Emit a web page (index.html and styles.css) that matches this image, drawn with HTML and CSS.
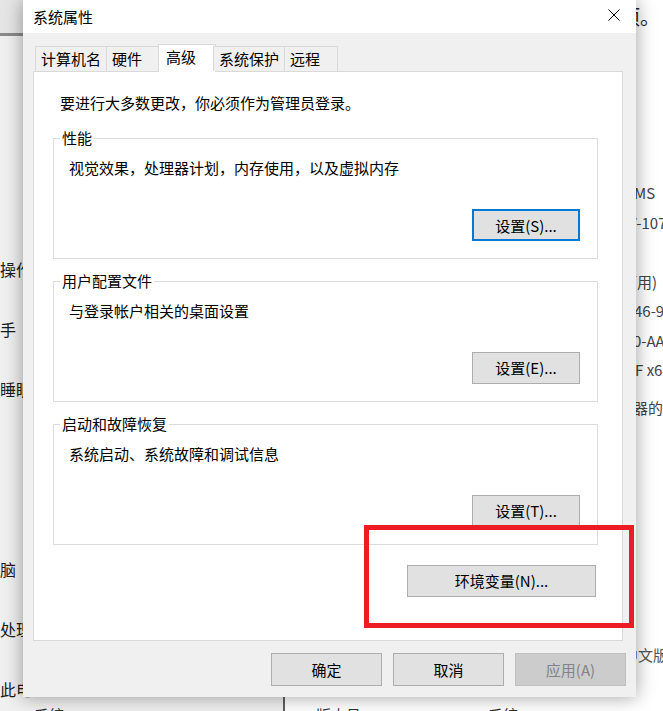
FILE: index.html
```html
<!DOCTYPE html>
<html lang="zh-CN">
<head>
  <meta charset="UTF-8" />
  <title>系统属性</title>
  <link rel="stylesheet" href="styles.css">
</head>
<body>

  <div class="side">
    <div class="side-top"></div>
    <div class="side-list">
      <div>操作</div>
      <div>手</div>
      <div>睡眠</div>
      <div></div>
      <div></div>
      <div>脑</div>
      <div>处理</div>
      <div>此电</div>
    </div>
  </div>

  <div class="info">
    <div class="info-title">选项。</div>
    <div class="info-list">
      <div class="i-ms">MS</div>
      <div class="i-ver">V-1070</div>
      <div></div>
      <div class="i-use">可用)</div>
      <div class="i-num">46-9</div>
      <div class="i-id">0-AA</div>
      <div class="i-arch">F x64</div>
      <div class="i-dev">器的</div>
    </div>
    <div class="info-foot">中文版</div>
  </div>

  <div class="foot-frag">
    <span class="f1">系统</span>
    <span class="f2">版本号</span>
    <span class="f3">系统</span>
  </div>

  <div class="dialog">
    <div class="titlebar">
      <span>系统属性</span>
      <div class="close">
        <svg width="12" height="12" viewBox="0 0 12 12">
          <path d="M0.5 0.5 L11.5 11.5 M11.5 0.5 L0.5 11.5" stroke="#000" stroke-width="1" fill="none"/>
        </svg>
      </div>
    </div>

    <div class="body">
      <div class="tabs">
        <div class="tab">计算机名</div>
        <div class="tab">硬件</div>
        <div class="tab active">高级</div>
        <div class="tab">系统保护</div>
        <div class="tab">远程</div>
      </div>

      <div class="panel">
        <div class="intro">要进行大多数更改，你必须作为管理员登录。</div>

        <fieldset class="group first">
          <legend>性能</legend>
          <p>视觉效果，处理器计划，内存使用，以及虚拟内存</p>
          <div class="row"><button class="btn default">设置(S)...</button></div>
        </fieldset>

        <fieldset class="group">
          <legend>用户配置文件</legend>
          <p>与登录帐户相关的桌面设置</p>
          <div class="row"><button class="btn">设置(E)...</button></div>
        </fieldset>

        <fieldset class="group">
          <legend>启动和故障恢复</legend>
          <p>系统启动、系统故障和调试信息</p>
          <div class="row"><button class="btn">设置(T)...</button></div>
        </fieldset>

        <div class="env-row"><button class="btn env">环境变量(N)...</button></div>
      </div>
    </div>

    <div class="footer">
      <button class="btn wide">确定</button>
      <button class="btn wide">取消</button>
      <button class="btn wide" disabled>应用(A)</button>
    </div>
  </div>

  <div class="mark"></div>

</body>
</html>
```

FILE: styles.css
```css
* { box-sizing: border-box; }

body {
  margin: 0;
  width: 663px;
  height: 711px;
  overflow: hidden;
  position: relative;
  background: #fff;
  font-family: "Noto Sans CJK SC", sans-serif;
  font-size: 15px;
  color: #000;
}

/* desktop behind the dialog */
.side {
  position: absolute;
  left: 0;
  top: 0;
  width: 285px;
  height: 711px;
  background: #f0f0f0;
  border-right: 2px solid #5f5f5f;
}

.side-top {
  height: 36px;
  background: #e6e6e6;
  border-bottom: 3px solid #8a8a8a;
}

.side-list { padding-top: 203px; }

.side-list div {
  height: 60px;
  line-height: 60px;
  font-size: 16px;
  color: #1a1a1a;
}

.info {
  position: absolute;
  left: 600px;
  top: 0;
  width: 63px;
  height: 711px;
  color: #444;
  white-space: nowrap;
}

.info-title {
  height: 33px;
  line-height: 33px;
  font-size: 20px;
  color: #222;
}

.info-list {
  padding-top: 145px;
}

.info-list div {
  height: 29.5px;
  line-height: 29.5px;
}

.i-ms { padding-left: 34px; }
.i-ver { padding-left: 28px; }
.i-use { padding-left: 22px; }
.i-num { padding-left: 34px; }
.i-id { padding-left: 33px; }
.i-arch { padding-left: 35px; }
.i-dev { padding-left: 33px; margin-top: 8px; }

.info-foot {
  margin-top: 222px;
  padding-left: 23px;
  color: #555;
}

.foot-frag {
  position: absolute;
  left: 0;
  top: 704px;
  width: 663px;
  color: #333;
  white-space: nowrap;
}

.foot-frag span { position: absolute; top: 0; }
.f1 { left: 34px; }
.f2 { left: 316px; }
.f3 { left: 488px; }

/* dialog window */
.dialog {
  position: absolute;
  left: 23px;
  top: 0;
  width: 613px;
  height: 697px;
  background: #f0f0f0;
  box-shadow: 0 0 18px rgba(0,0,0,0.38);
  z-index: 2;
}

.titlebar {
  height: 33px;
  background: #fff;
  display: flex;
  align-items: center;
  justify-content: space-between;
  padding-left: 10px;
}

.close {
  width: 44px;
  height: 33px;
  display: flex;
  align-items: center;
  justify-content: center;
  margin-top: -3px;
}

.body {
  padding: 11px 13px 0 10px;
}

.tabs {
  display: flex;
  align-items: flex-end;
  height: 27px;
  padding-left: 2px;
  position: relative;
  z-index: 1;
}

.tab {
  height: 25px;
  line-height: 24px;
  padding: 0 5px;
  min-width: 54px;
  border: 1px solid #d9d9d9;
  border-bottom: none;
  margin-left: -1px;
  background: #f0f0f0;
}

.tab:first-child { margin-left: 0; }

.tab.active {
  height: 28px;
  margin: 0 -2px -1px -2px;
  padding: 0 7px;
  min-width: 58px;
  background: #fff;
}

.panel {
  height: 570px;
  background: #fff;
  border: 1px solid #d9d9d9;
  padding: 21px 24px 0 19px;
}

.intro {
  line-height: 20px;
  margin-left: 7px;
}

.group {
  margin: 12px 0 0;
  padding: 0 17px 17px 15px;
  border: 1px solid #dcdcdc;
  min-width: 0;
}

.group.first { margin-top: 15px; }

.group legend {
  padding: 0 2px;
  margin-left: -9px;
  line-height: 20px;
}

.group p {
  margin: 10px 0 0;
  line-height: 20px;
}

.row {
  display: flex;
  justify-content: flex-end;
  margin-top: 31px;
}

.btn {
  height: 32px;
  width: 108px;
  padding: 0;
  border: 1px solid #adadad;
  background: #e1e1e1;
  color: #000;
  font: inherit;
  line-height: 30px;
}

.btn.default { border: 2px solid #0078d7; }

.env-row {
  display: flex;
  justify-content: flex-end;
  margin-top: 20px;
  padding-right: 2px;
}

.btn.env { width: 189px; }

.footer {
  display: flex;
  justify-content: flex-end;
  gap: 11px;
  padding: 12px 10px 0 0;
}

.btn.wide {
  width: 111px;
  height: 33px;
  line-height: 31px;
}

.btn:disabled {
  background: #cccccc;
  border-color: #bfbfbf;
  color: #838383;
}

/* annotation drawn over the screenshot */
.mark {
  position: absolute;
  left: 364px;
  top: 525px;
  width: 270px;
  height: 103px;
  border: 5px solid #ed1c24;
  z-index: 3;
}
```
